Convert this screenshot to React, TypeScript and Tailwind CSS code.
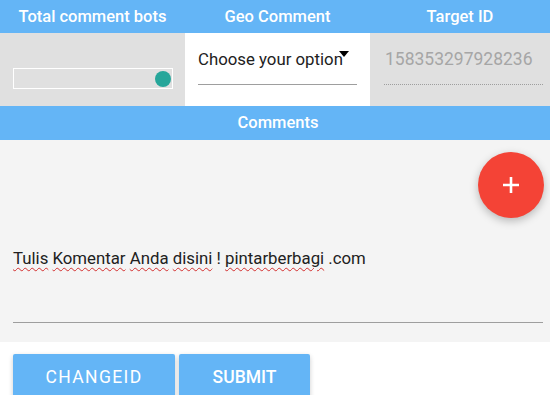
export default function App() {
  const word = "underline decoration-wavy decoration-[#d32f2f] decoration-1 underline-offset-[3px]";
  return (
    <div className="w-[550px] h-[395px] overflow-hidden bg-white font-['Roboto',sans-serif]">
      {/* Header */}
      <div className="grid grid-cols-[185px_185px_180px] h-[33px] bg-[#64b5f6] text-white text-[16.5px] font-medium">
        <div className="flex items-center justify-center pt-px">Total comment bots</div>
        <div className="flex items-center justify-center pt-px">Geo Comment</div>
        <div className="flex items-center justify-center pt-px">Target ID</div>
      </div>

      {/* Controls */}
      <div className="grid grid-cols-[185px_185px_180px] h-[73px]">
        <div className="bg-[#e0e0e0] pl-[13px] pt-[35px]">
          <div className="relative w-[160px] h-[21px] border-[1.5px] border-white bg-[#e0e0e0]">
            <span className="absolute right-[1px] top-[1.5px] w-[16px] h-[16px] rounded-full bg-[#26a69a]" />
          </div>
        </div>
        <div className="bg-white px-[13px] pt-[15px]">
          <div className="relative h-[37px] border-b border-[#9e9e9e] text-[16.8px] text-[#212121] leading-[20px] pt-[1px]">
            Choose your option
            <span className="absolute right-[8px] top-[3px] w-0 h-0 border-l-[5px] border-r-[5px] border-t-[6px] border-l-transparent border-r-transparent border-t-black" />
          </div>
        </div>
        <div className="bg-[#e0e0e0] pl-[14px] pr-[7px] pt-[15px]">
          <div className="h-[37px] border-b border-dotted border-[#9e9e9e] text-[17.5px] text-[#a6a6a6] leading-[20px] pt-[1px] pl-px">
            158353297928236
          </div>
        </div>
      </div>

      {/* Comments bar */}
      <div className="h-[34px] bg-[#64b5f6] text-white text-[16.5px] font-medium flex items-center justify-center pl-[6px]">
        Comments
      </div>

      {/* Comment area */}
      <div className="relative h-[202px] bg-[#f4f4f4] pl-[13px] pr-[7px] pt-[107px]">
        <button className="absolute right-[6px] top-[12px] w-[66px] h-[66px] rounded-full bg-[#f44336] text-white flex items-center justify-center shadow-[0_3px_8px_rgba(0,0,0,0.25)]">
          <svg width="18" height="18" viewBox="0 0 18 18">
            <path d="M9 1v16M1 9h16" stroke="white" strokeWidth="2.6" />
          </svg>
        </button>
        <div className="h-[76px] border-b border-[#9e9e9e] text-[16.8px] text-[#212121] leading-[22px]">
          <span className={word}>Tulis</span> <span className={word}>Komentar</span>{" "}
          <span className={word}>Anda</span> <span className={word}>disini</span> !{" "}
          <span className={word}>pintarberbagi</span> .com
        </div>
      </div>

      {/* Buttons */}
      <div className="flex gap-[4px] pl-[13px] pt-[12px]">
        <button className="w-[162px] h-[54px] rounded-[2px] bg-[#64b5f6] text-white text-[17.5px] tracking-[0.08em] shadow-[0_2px_5px_rgba(0,0,0,0.2)] pb-[8px]">
          CHANGEID
        </button>
        <button className="w-[131px] h-[54px] rounded-[2px] bg-[#64b5f6] text-white text-[17.5px] font-medium shadow-[0_2px_5px_rgba(0,0,0,0.2)] pb-[8px]">
          SUBMIT
        </button>
      </div>
    </div>
  );
}
